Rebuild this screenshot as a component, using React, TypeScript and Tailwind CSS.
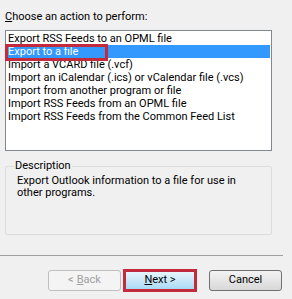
import React from 'react';

const items = [
  'Export RSS Feeds to an OPML file',
  'Export to a file',
  'Import a VCARD file (.vcf)',
  'Import an iCalendar (.ics) or vCalendar file (.vcs)',
  'Import from another program or file',
  'Import RSS Feeds from an OPML file',
  'Import RSS Feeds from the Common Feed List',
];

export default function App() {
  const selected = 1;

  return (
    <div className="relative w-[292px] h-[299px] bg-[#f0f0f0] text-[11px] text-black overflow-hidden" style={{ fontFamily: 'Roboto, "Noto Sans", sans-serif' }}>
      <div className="pl-[5px] pt-[9px] leading-[15px]">
        <span className="underline">C</span>hoose an action to perform:
      </div>

      {/* list */}
      <div className="ml-[5px] mt-[6px] w-[267px] h-[121px] border border-[#828790] bg-white pt-[1px] px-[1px]">
        {items.map((it, i) => (
          <div
            key={it}
            className={
              i === selected
                ? 'h-[13px] leading-[13px] pl-[1px] bg-[#3399ff] text-white whitespace-nowrap'
                : 'h-[13px] leading-[13px] pl-[1px] whitespace-nowrap'
            }
          >
            {it}
          </div>
        ))}
      </div>

      {/* description group */}
      <fieldset className="ml-[5px] mt-[8px] w-[267px] h-[76px] border border-[#dcdcdc] rounded-[2px] pl-[11px] pr-[6px]">
        <legend className="px-[1px] leading-[14px] -ml-[3px]">Description</legend>
        <div className="leading-[12px] pt-[2px] whitespace-nowrap">
          Export Outlook information to a file for use in
          <br />
          other programs.
        </div>
      </fieldset>

      <div className="mt-[20px] w-[283px] border-t border-[#a0a0a0]" />

      <div className="flex mt-[14px] pl-[48px] gap-[2px]">
        <div className="w-[73px] h-[21px] rounded-[3px] border border-[#bfbfbf] bg-[#f4f4f4] flex items-center justify-center text-[#a0a0a0]">
          &lt; <span className="underline ml-[3px]">B</span>ack
        </div>
        <div className="w-[74px] h-[23px] -mt-[1px] border-[3px] border-[#c32a3b] bg-gradient-to-b from-[#e8f4fc] to-[#a9dbf6] flex items-center justify-center">
          <span className="underline">N</span>ext &gt;
        </div>
        <div className="ml-[10px] w-[73px] h-[21px] rounded-[3px] border border-[#707070] bg-gradient-to-b from-[#f3f3f3] to-[#d8d8d8] flex items-center justify-center">
          Cancel
        </div>
      </div>

      {/* annotation box over the selected row */}
      <div className="absolute left-[5px] top-[44px] w-[103px] h-[17px] border-[3px] border-[#c32a3b]" />
    </div>
  );
}
